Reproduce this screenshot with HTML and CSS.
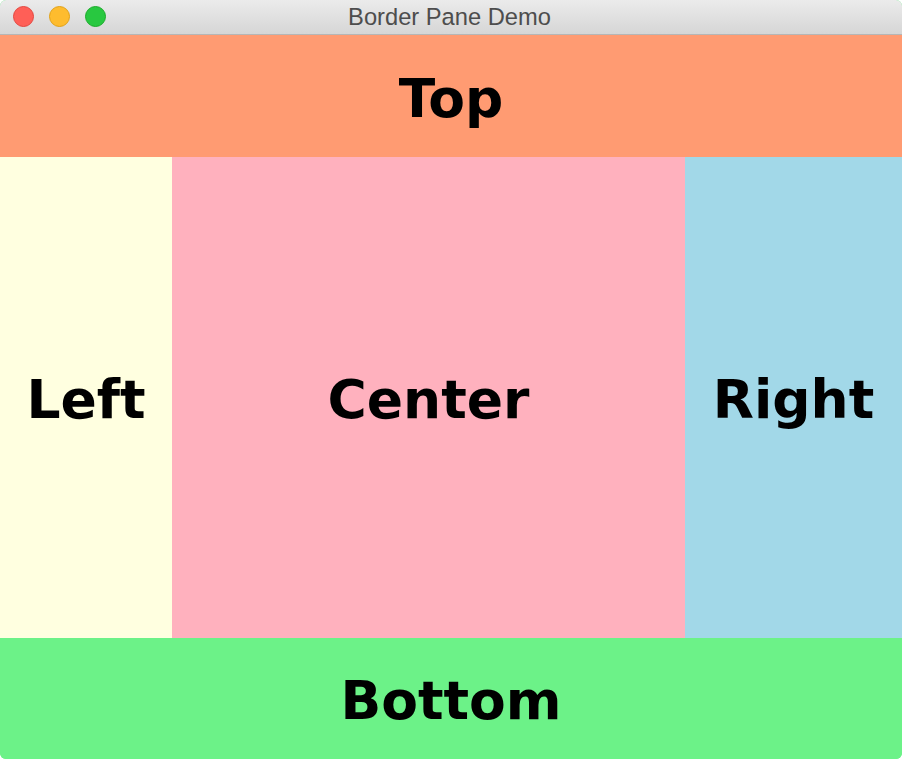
FILE: index.html
```html
<!doctype html>
<html>
<head>
<meta charset="UTF-8">
<title>Border Pane Demo</title>
<link rel="stylesheet" href="styles.css">
</head>
<body>
    <div class="ikkuna">
        <div class="otsikkopalkki">
            <div class="napit">
                <span class="nappi punainen"></span>
                <span class="nappi keltainen"></span>
                <span class="nappi vihrea"></span>
            </div>
            <div class="otsikko">Border Pane Demo</div>
        </div>
        <div class="alue ylaosa">Top</div>
        <div class="keskirivi">
            <div class="alue vasen">Left</div>
            <div class="alue keski">Center</div>
            <div class="alue oikea">Right</div>
        </div>
        <div class="alue alaosa">Bottom</div>
    </div>
</body>
</html>
```
FILE: styles.css
```css
html, body {
    margin: 0;
    padding: 0;
    background-color: #ffffff;
}

.ikkuna {
    width: 902px;
    height: 759px;
    display: flex;
    flex-direction: column;
    border-radius: 6px;
    overflow: hidden;
    background-color: #6cf288;
}

.otsikkopalkki {
    position: relative;
    height: 34px;
    flex: 0 0 34px;
    background: linear-gradient(#ebebeb, #d6d6d6);
    border-bottom: 1px solid #b6b6b6;
    display: flex;
    align-items: center;
    justify-content: center;
}

.napit {
    position: absolute;
    left: 13px;
    top: 6px;
    display: flex;
    gap: 15px;
}

.nappi {
    display: block;
    width: 21px;
    height: 21px;
    border-radius: 50%;
    box-sizing: border-box;
}

.punainen {
    background-color: #ff5f57;
    border: 1px solid #e2463f;
}

.keltainen {
    background-color: #febc2e;
    border: 1px solid #e1a116;
}

.vihrea {
    background-color: #28c840;
    border: 1px solid #1aab29;
}

.otsikko {
    font-family: "Liberation Sans", Arial, sans-serif;
    font-size: 23.7px;
    color: #4d4d4d;
    margin-top: 1px;
    margin-left: -3px;
}

.alue {
    display: flex;
    align-items: center;
    justify-content: center;
    padding-top: 4px;
    box-sizing: border-box;
    font-family: "DejaVu Sans", Verdana, sans-serif;
    font-weight: bold;
    font-size: 53.5px;
    color: #000000;
}

.ylaosa {
    flex: 0 0 122px;
    background-color: #ff9b72;
}

.keskirivi {
    flex: 1;
    display: grid;
    grid-template-columns: 172px 513px 1fr;
}

.vasen {
    background-color: #ffffe0;
}

.keski {
    background-color: #ffb1be;
}

.oikea {
    background-color: #a2d8e8;
}

.alaosa {
    flex: 0 0 121px;
    background-color: #6cf288;
}
```
